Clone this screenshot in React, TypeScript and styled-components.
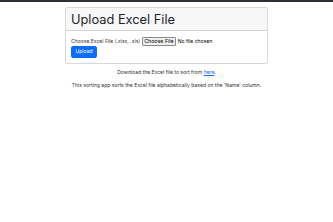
import styled, { createGlobalStyle } from 'styled-components';

const GlobalStyle = createGlobalStyle`
  html, body {
    margin: 0;
    padding: 0;
    background: #fff;
    font-family: Inter, 'Liberation Sans', sans-serif;
    color: #212529;
  }
`;

const TopBar = styled.div`
  height: 2px;
  background: #2b3035;
`;

const Container = styled.main`
  width: 203px;
  margin: 5px auto 0;
  text-align: center;
`;

const Card = styled.section`
  border: 1px solid rgba(0, 0, 0, 0.15);
  border-radius: 2px;
  text-align: left;
  overflow: hidden;
`;

const CardHeader = styled.header`
  background: #f7f7f7;
  border-bottom: 1px solid rgba(0, 0, 0, 0.15);
  padding: 3px 5px 2px;
`;

const Title = styled.h1`
  margin: 0;
  font-size: 12.8px;
  font-weight: 400;
  line-height: 17px;
`;

const CardBody = styled.form`
  padding: 5px 5px 5px;
`;

const FieldRow = styled.div`
  display: flex;
  align-items: center;
  height: 10px;
  font-size: 5.05px;
  color: #333;
`;

const Label = styled.label`
  margin-right: 1.5px;
`;

const FileButton = styled.span`
  display: inline-flex;
  align-items: center;
  height: 9px;
  box-sizing: border-box;
  padding: 0 1.5px;
  background: #efefef;
  border: 1px solid #8a8a8a;
  border-radius: 1px;
  font-size: 5.3px;
  color: #000;
`;

const FileStatus = styled.span`
  margin-left: 1.5px;
  color: #000;
`;

const UploadButton = styled.button`
  display: block;
  height: 12px;
  padding: 0 3.5px;
  background: #0d6efd;
  border: 1px solid #0d6efd;
  border-radius: 2px;
  color: #fff;
  font-family: inherit;
  font-size: 5.05px;
  line-height: 1;
`;

const Note = styled.p`
  margin: 0 0 5px;
  font-size: 5.05px;
  line-height: 8px;
  color: #333;
  &:first-of-type {
    margin-top: 4px;
  }
  a {
    color: #0d6efd;
  }
`;

export default function App() {
  return (
    <>
      <GlobalStyle />
      <TopBar />
      <Container>
        <Card>
          <CardHeader>
            <Title>Upload Excel File</Title>
          </CardHeader>
          <CardBody>
            <FieldRow>
              <Label>Choose Excel File (.xlsx, .xls)</Label>
              <FileButton>Choose File</FileButton>
              <FileStatus>No file chosen</FileStatus>
            </FieldRow>
            <UploadButton type="button">Upload</UploadButton>
          </CardBody>
        </Card>
        <Note>
          Download the Excel file to sort from <a href="#">here</a>.
        </Note>
        <Note>This sorting app sorts the Excel file alphabetically based on the 'Name' column.</Note>
      </Container>
    </>
  );
}
